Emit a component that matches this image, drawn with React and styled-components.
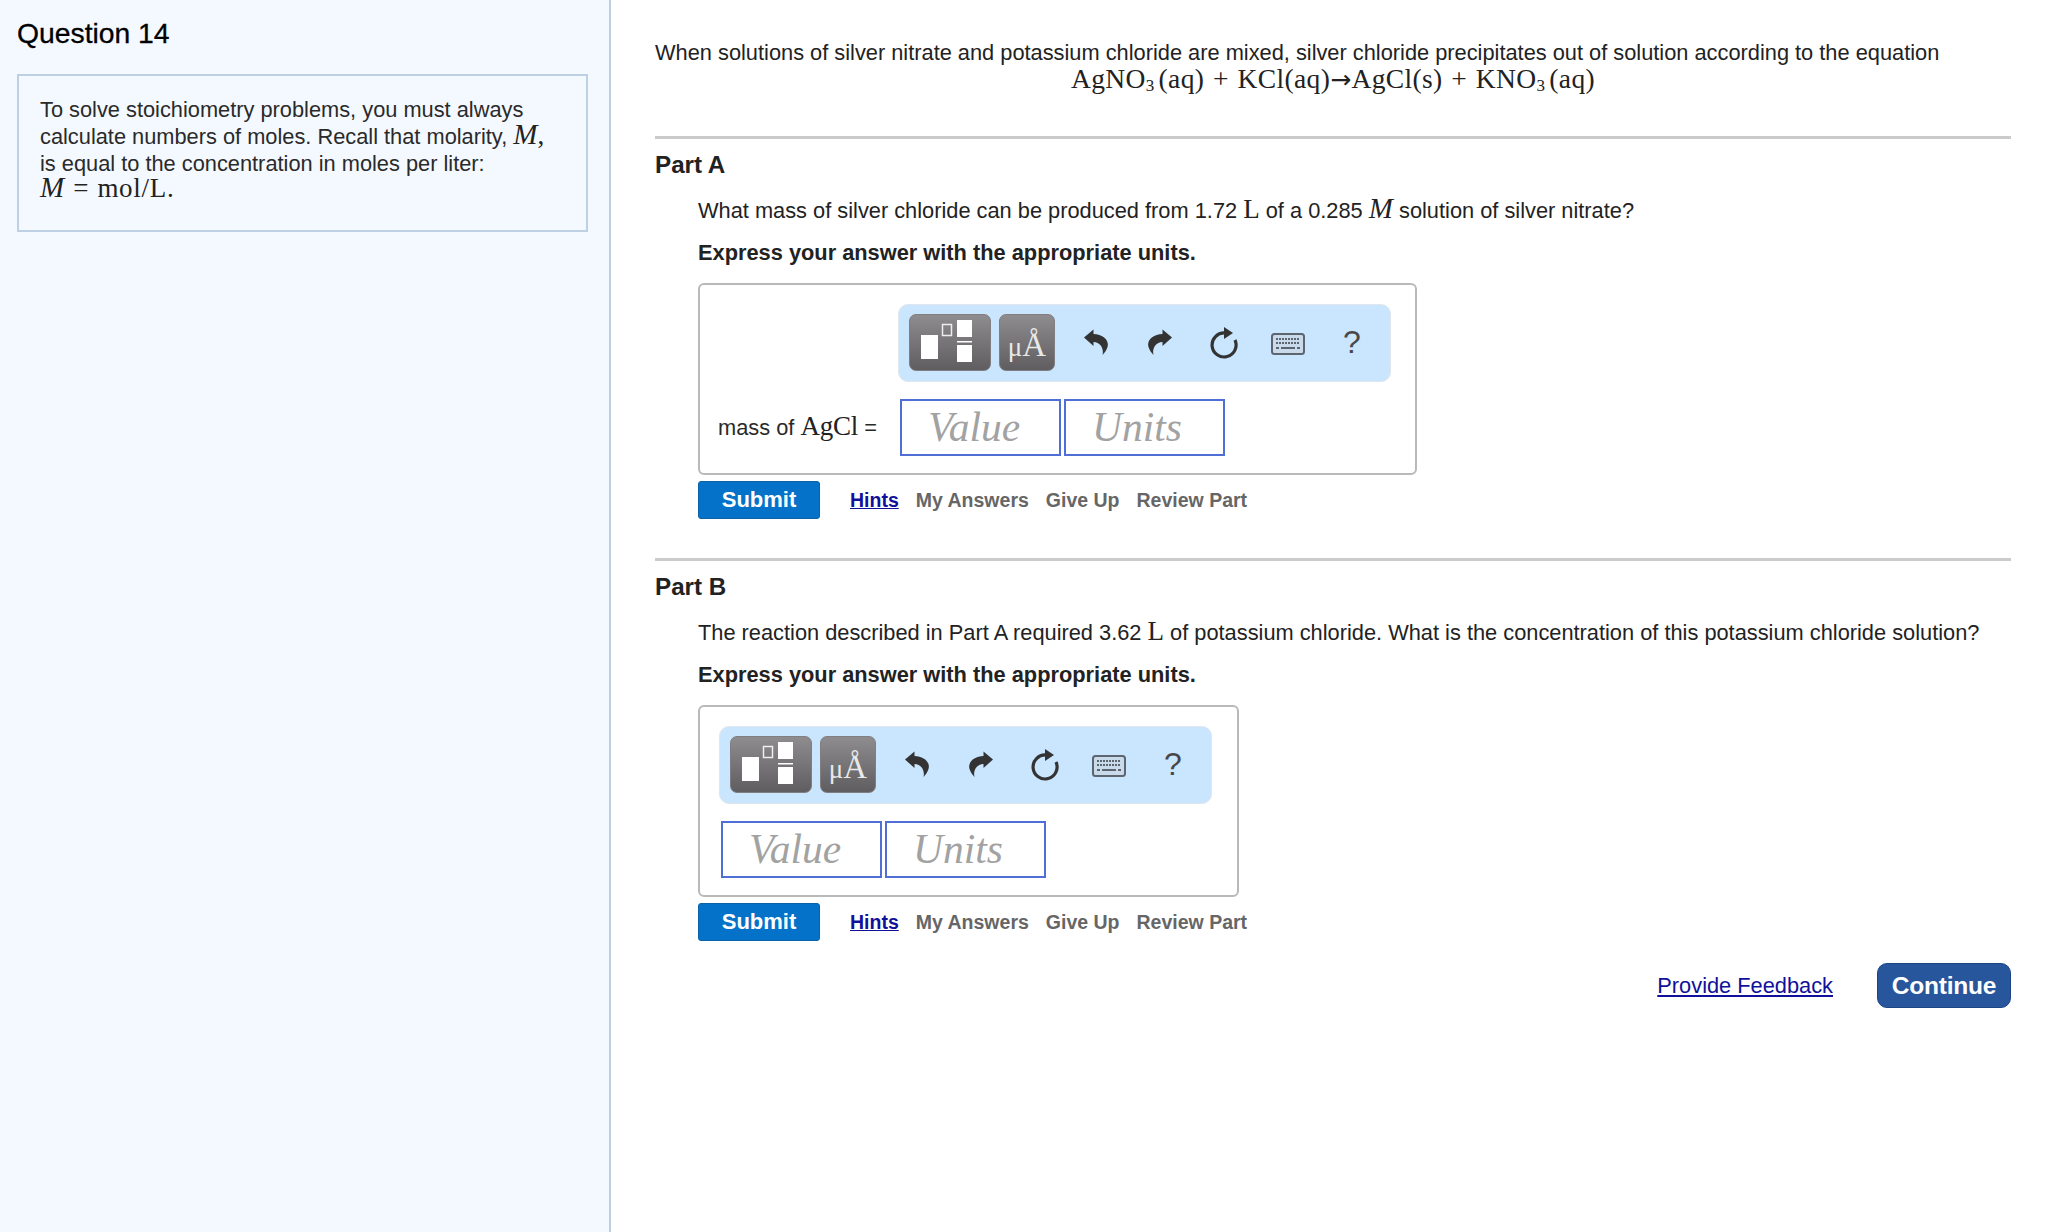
import React from "react";
import styled, { createGlobalStyle } from "styled-components";

const Global = createGlobalStyle`
  html, body { margin: 0; padding: 0; background: #fff; }
  body { font-family: "Liberation Sans", Arial, sans-serif; color: #222; }
`;

const Page = styled.div`
  display: flex;
  width: 2046px;
  height: 1232px;
  overflow: hidden;
`;
const Sidebar = styled.aside`
  width: 611px;
  flex: none;
  box-sizing: border-box;
  background: #f4f9ff;
  border-right: 2px solid #bccfe2;
  padding: 16px 0 0 17px;
`;
const QuestionTitle = styled.h1`
  margin: 0;
  font-size: 28.3px;
  line-height: 34px;
  font-weight: 400;
  color: #000;
  -webkit-text-stroke: 0.3px #000;
`;
const HintBox = styled.div`
  box-sizing: border-box;
  width: 571px;
  height: 158px;
  margin-top: 24px;
  padding: 21px 21px 0 21px;
  border: 2px solid #bed0e3;
  font-size: 21.8px;
  line-height: 26.8px;
  color: #2a2a2a;
`;
const Main = styled.main`
  flex: 1;
  padding: 0 35px 0 44px;
`;
const Math = styled.span`
  font-family: "Liberation Serif", "DejaVu Serif", serif;
  font-size: ${(p) => p.$size || 27}px;
  font-style: ${(p) => (p.$italic ? "italic" : "normal")};
  letter-spacing: ${(p) => p.$track || 0}px;
  margin: 0 ${(p) => p.$gap || 0}px;
  line-height: 0;
  color: #222;
`;
const Intro = styled.p`
  margin: 40px 0 0;
  font-size: 21.8px;
  line-height: 26px;
`;
const Equation = styled.div`
  text-align: center;
  font-family: "Liberation Serif", serif;
  font-size: 27.5px;
  line-height: 25px;
  letter-spacing: 0.35px;
  word-spacing: 1.5px;
  color: #222;
  sub { font-size: 17px; line-height: 0; vertical-align: -3px; margin-right: 4px; }
`;
const EquationArrow = styled.span`
  font-family: "DejaVu Sans", sans-serif;
  font-size: 25px;
  line-height: 0;
`;
const PartSection = styled.section`
  margin-top: ${(p) => p.$top}px;
  border-top: 3px solid #cbcbcb;
`;
const PartTitle = styled.h2`
  margin: 12px 0 0;
  font-size: 24.2px;
  line-height: 28px;
  font-weight: 700;
  color: #222;
`;
const PartBody = styled.div`
  padding-left: 43px;
`;
const Question = styled.p`
  margin: 18px 0 0;
  font-size: 21.8px;
  line-height: 28px;
  white-space: nowrap;
`;
const Instruction = styled.p`
  margin: 14px 0 0;
  font-size: 21.8px;
  line-height: 27px;
  font-weight: 700;
`;
const AnswerBox = styled.div`
  box-sizing: border-box;
  width: ${(p) => p.$width}px;
  height: 192px;
  margin-top: 17px;
  padding: 19px 0 0 ${(p) => (p.$labelled ? 18 : 19)}px;
  border: 2px solid #b9b9b9;
  border-radius: 6px;
  display: grid;
  grid-template-columns: ${(p) => (p.$labelled ? "180px" : "0")} auto;
  grid-auto-rows: min-content;
  row-gap: 17px;
  justify-content: start;
`;
const Toolbar = styled.div`
  grid-column: 2;
  box-sizing: border-box;
  width: 493px;
  height: 78px;
  background: #cae5fe;
  border: 1px solid #dfe6ec;
  border-radius: 10px;
  padding: 9px 0 0 10px;
  display: flex;
  align-items: flex-start;
  gap: 8px;
`;
const ToolButton = styled.div`
  box-sizing: border-box;
  width: ${(p) => p.$width}px;
  height: 57px;
  border-radius: 7px;
  border: 1px solid #807e80;
  background: linear-gradient(#8e8c8e, #5f5d5f);
  display: flex;
  align-items: flex-end;
  justify-content: center;
`;
const UnitGlyph = styled.span`
  font-family: "Liberation Serif", serif;
  font-size: 33px;
  line-height: 46px;
  color: #e8e8e8;
`;
const UnitMicro = styled.span`
  font-size: 27px;
`;
const ToolIcon = styled.div`
  width: 64px;
  height: 56px;
  flex: none;
  margin-left: ${(p) => p.$offset || 0}px;
  padding-top: ${(p) => p.$drop || 0}px;
  box-sizing: border-box;
  display: flex;
  align-items: center;
  justify-content: center;
`;
const HelpGlyph = styled.span`
  font-family: "Liberation Sans", sans-serif;
  font-size: 32px;
  line-height: 36px;
  color: #474747;
`;
const FieldLabel = styled.div`
  grid-column: 1;
  align-self: center;
  font-size: 21.8px;
  white-space: nowrap;
  color: #2a2a2a;
`;
const Fields = styled.div`
  grid-column: 2;
  display: flex;
  gap: 3px;
  margin-left: 2px;
`;
const Field = styled.div`
  box-sizing: border-box;
  width: 161px;
  height: 57px;
  border: 2px solid #4f6fd6;
  background: #fff;
  padding-left: 26px;
  font-family: "Liberation Serif", serif;
  font-style: italic;
  font-size: 41.5px;
  line-height: 52px;
  color: #a2a2a2;
`;
const Actions = styled.div`
  display: flex;
  align-items: center;
  margin-top: 6px;
  height: 38px;
`;
const SubmitButton = styled.button`
  box-sizing: border-box;
  width: 122px;
  height: 38px;
  padding: 0;
  margin-right: 30px;
  background: #0472c8;
  border: 1px solid #0a62a8;
  border-radius: 3px;
  color: #fff;
  font: 700 22px "Liberation Sans", sans-serif;
`;
const ActionLink = styled.a`
  font-size: 19.5px;
  font-weight: 700;
  margin-right: 17px;
  color: ${(p) => (p.$active ? "#10109a" : "#666")};
  text-decoration: ${(p) => (p.$active ? "underline" : "none")};
`;
const Footer = styled.div`
  display: flex;
  justify-content: flex-end;
  align-items: center;
  gap: 44px;
  margin-top: 22px;
`;
const FeedbackLink = styled.a`
  font-size: 21.8px;
  color: #10109a;
  text-decoration: underline;
`;
const ContinueButton = styled.button`
  box-sizing: border-box;
  width: 134px;
  height: 45px;
  padding: 0;
  background: #27569c;
  border: 1px solid #1c4585;
  border-radius: 10px;
  color: #fff;
  font: 700 24.5px "Liberation Sans", sans-serif;
  letter-spacing: -0.2px;
`;

const TemplatesIcon = () => (
  <svg width="80" height="55" viewBox="0 0 80 55">
    <rect x="11" y="20" width="17" height="24" fill="#fff" />
    <rect x="32.5" y="9.5" width="9" height="11" fill="none" stroke="#eee" strokeWidth="1.5" />
    <rect x="47" y="5" width="15" height="17" fill="#fff" />
    <rect x="47" y="26" width="15" height="1.5" fill="#fff" />
    <rect x="47" y="30" width="15" height="17" fill="#fff" />
  </svg>
);
const ArrowIcon = ({ flip }) => (
  <svg width="26" height="28" viewBox="0 0 26 28" style={flip ? { transform: "scaleX(-1)" } : undefined}>
    <path d="M1 9.5 L10.5 1.5 V6 C20 6.5 26.5 12 24.5 19 C23.5 22 21.5 25 19.5 27 C21 21 18 14.5 10.5 14 V18 Z" fill="#333" />
  </svg>
);
const RefreshIcon = () => (
  <svg width="32" height="34" viewBox="0 0 32 34">
    <path d="M17 8 A12 12 0 1 0 27 15" fill="none" stroke="#333" strokeWidth="3.2" />
    <path d="M16 2 L25 8 L16 14 Z" fill="#333" />
  </svg>
);
const KeyboardIcon = () => (
  <svg width="34" height="22" viewBox="0 0 34 22">
    <rect x="1" y="1" width="32" height="20" rx="2.5" fill="#c9dbea" stroke="#5d6670" strokeWidth="2" />
    <path d="M5 6h24M5 10h24" stroke="#5d6670" strokeWidth="2" strokeDasharray="2 1" />
    <path d="M5 15h3M10 15h14M26 15h3" stroke="#5d6670" strokeWidth="2" />
  </svg>
);

const ToolRow = () => (
  <Toolbar>
    <ToolButton $width={82}><TemplatesIcon /></ToolButton>
    <ToolButton $width={56}><UnitGlyph><UnitMicro>μ</UnitMicro>Å</UnitGlyph></ToolButton>
    <ToolIcon $offset={1}><ArrowIcon /></ToolIcon>
    <ToolIcon $offset={-8}><ArrowIcon flip /></ToolIcon>
    <ToolIcon $offset={-8}><RefreshIcon /></ToolIcon>
    <ToolIcon $offset={-8} $drop={4}><KeyboardIcon /></ToolIcon>
    <ToolIcon $offset={-8}><HelpGlyph>?</HelpGlyph></ToolIcon>
  </Toolbar>
);

const Inputs = () => (
  <Fields>
    <Field>Value</Field>
    <Field>Units</Field>
  </Fields>
);

const ActionRow = () => (
  <Actions>
    <SubmitButton>Submit</SubmitButton>
    <ActionLink $active>Hints</ActionLink>
    <ActionLink>My Answers</ActionLink>
    <ActionLink>Give Up</ActionLink>
    <ActionLink>Review Part</ActionLink>
  </Actions>
);

export default function App() {
  return (
    <Page>
      <Global />
      <Sidebar>
        <QuestionTitle>Question 14</QuestionTitle>
        <HintBox>
          To solve stoichiometry problems, you must always<br />
          calculate numbers of moles. Recall that molarity, <Math $italic $size={29}>M</Math><Math>,</Math><br />
          is equal to the concentration in moles per liter:<br />
          <Math $italic $size={29}>M</Math><Math $gap={9}>=</Math><Math $track={0.7}>mol/L.</Math>
        </HintBox>
      </Sidebar>
      <Main>
        <Intro>When solutions of silver nitrate and potassium chloride are mixed, silver chloride precipitates out of solution according to the equation</Intro>
        <Equation>
          AgNO<sub>3</sub>(aq) + KCl(aq)<EquationArrow>→</EquationArrow>AgCl(s) + KNO<sub>3</sub>(aq)
        </Equation>
        <PartSection $top={45}>
          <PartTitle>Part A</PartTitle>
          <PartBody>
            <Question>
              What mass of silver chloride can be produced from 1.72 <Math>L</Math> of a 0.285 <Math $italic $size={29}>M</Math> solution of silver nitrate?
            </Question>
            <Instruction>Express your answer with the appropriate units.</Instruction>
            <AnswerBox $width={719} $labelled>
              <ToolRow />
              <FieldLabel>mass of <Math $track={-0.2}>AgCl</Math> =</FieldLabel>
              <Inputs />
            </AnswerBox>
            <ActionRow />
          </PartBody>
        </PartSection>
        <PartSection $top={39}>
          <PartTitle>Part B</PartTitle>
          <PartBody>
            <Question>
              The reaction described in Part A required 3.62 <Math>L</Math> of potassium chloride. What is the concentration of this potassium chloride solution?
            </Question>
            <Instruction>Express your answer with the appropriate units.</Instruction>
            <AnswerBox $width={541}>
              <ToolRow />
              <Inputs />
            </AnswerBox>
            <ActionRow />
          </PartBody>
        </PartSection>
        <Footer>
          <FeedbackLink>Provide Feedback</FeedbackLink>
          <ContinueButton>Continue</ContinueButton>
        </Footer>
      </Main>
    </Page>
  );
}
